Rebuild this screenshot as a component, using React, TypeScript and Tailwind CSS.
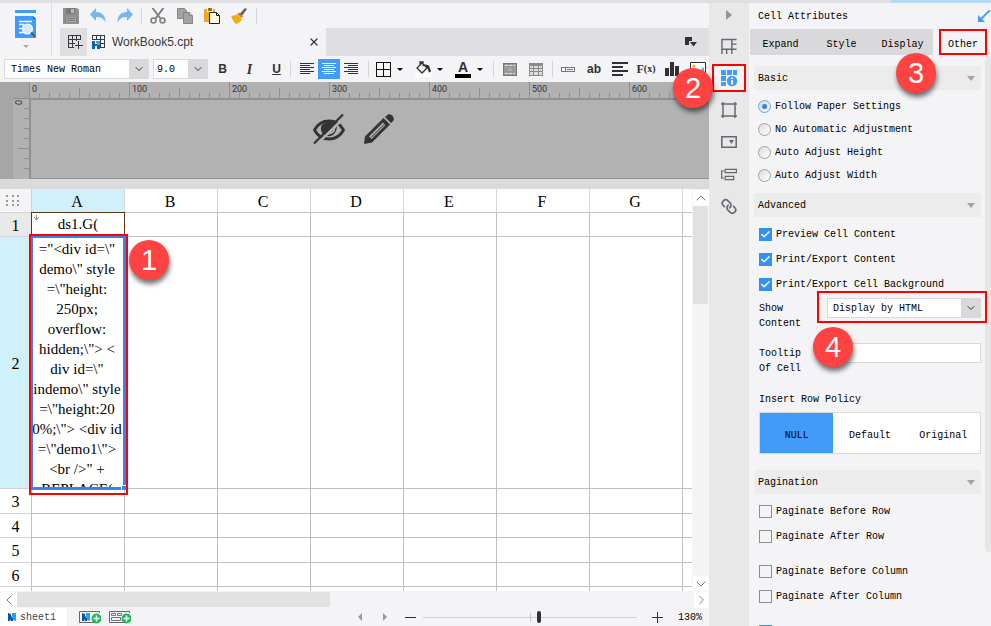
import type { ReactNode } from 'react';
import { Check, ChevronDown, ChevronLeft, ChevronRight, ChevronUp, Link, X } from 'lucide-react';

const columns = ['A', 'B', 'C', 'D', 'E', 'F', 'G'];

const formulaLines = [
  '="<div id=\\"',
  'demo\\" style',
  '=\\"height:',
  '250px;',
  'overflow:',
  'hidden;\\"> <',
  'div id=\\"',
  'indemo\\" style',
  '=\\"height:20',
  '0%;\\"> <div id',
  '=\\"demo1\\">',
  '<br />" +',
  'REPLACE(',
];

const rows = [
  { label: '1', height: 'h-[24px]' },
  { label: '2', height: 'h-[252px]' },
  { label: '3', height: 'h-[25px]' },
  { label: '4', height: 'h-[24px]' },
  { label: '5', height: 'h-[25px]' },
  { label: '6', height: 'h-[24px]' },
];

const rulerMarks = [0, 100, 200, 300, 400, 500, 600];
const rulerTicks = 'M.5 0v16M50.500 6v10M10.500 11v5M20.500 11v5M30.500 11v5M40.500 11v5M60.500 11v5M70.500 11v5M80.500 11v5M90.500 11v5';

function Callout({ n, className }: { n: number; className: string }) {
  return (
    <span
      className={`absolute z-30 flex h-10 w-10 items-center justify-center rounded-full bg-[#ff4242] font-['Liberation_Sans',sans-serif] text-[29px] leading-none text-white shadow-[1px_4px_5px_rgba(0,0,0,0.55)] ${className}`}
    >
      {n}
    </span>
  );
}

function Divider() {
  return <span className="h-4 w-px shrink-0 bg-[#d5d5d8]" />;
}

function IconButton({ label, className = 'w-4', children }: { label: string; className?: string; children: ReactNode }) {
  return (
    <button type="button" aria-label={label} className={`flex h-5 shrink-0 items-center justify-center ${className}`}>
      {children}
    </button>
  );
}

function Caret() {
  return (
    <svg width="6" height="3" viewBox="0 0 6 3" className="fill-black">
      <path d="M0 0h6L3 3z" />
    </svg>
  );
}

/* ---------- top bars ---------- */

function QuickToolbar() {
  return (
    <div className="flex h-[25px] items-center gap-[11px] pl-[3px]">
      <IconButton label="Save">
        <svg width="16" height="16" viewBox="0 0 16 16">
          <path d="M0 0h14l2 2v14H0z" fill="#909090" />
          <path d="M3 0h9v6H3zM2 9h12v5H2z" fill="#7a7a7a" />
          <path d="M8 1h3v4H8z" fill="#b9b9b9" />
          <path d="M3 9h10v5H3z" fill="#a5a5a5" />
          <path d="M4 10.500h8M4 12.500h8" stroke="#7a7a7a" />
        </svg>
      </IconButton>
      <IconButton label="Undo">
        <svg width="16" height="15" viewBox="0 0 16 15">
          <path d="M6 0v4c6 0 9.500 3.500 9.500 10.500C13.500 10.500 11 9 6 9v4L0 6.500z" fill="#78b4f0" />
        </svg>
      </IconButton>
      <IconButton label="Redo">
        <svg width="16" height="15" viewBox="0 0 16 15">
          <path d="M10 0v4C4 4 .5 7.500.5 14.500 2.500 10.500 5 9 10 9v4l6-6.500z" fill="#78b4f0" />
        </svg>
      </IconButton>
      <div className="-mx-[3px] flex">
        <Divider />
      </div>
      <IconButton label="Cut">
        <svg width="16" height="16" viewBox="0 0 16 16" fill="none" stroke="#808080" strokeWidth="2">
          <path d="M2.500 0l8 10.500M13.500 0l-8 10.500" />
          <circle cx="3.500" cy="12.500" r="2.500" strokeWidth="1.600" />
          <circle cx="12.500" cy="12.500" r="2.500" strokeWidth="1.600" />
        </svg>
      </IconButton>
      <IconButton label="Copy">
        <svg width="16" height="16" viewBox="0 0 16 16" fill="#a3a3a3" stroke="#858585">
          <path d="M.5.5h7l2 2v8h-9z" />
          <path d="M6.500 4.500h6l3 3v8h-9z" />
          <path d="M12.500 4.500v3h3" fill="#ddd" />
        </svg>
      </IconButton>
      <IconButton label="Paste">
        <svg width="16" height="16" viewBox="0 0 16 16">
          <path d="M0 1h3v3h6V1h2v13H0z" fill="#f2a81d" />
          <path d="M4 0h4v3H4z" fill="#a86c08" />
          <path d="M5.500 4.500h7l3 3v8h-10z" fill="#fffbe6" stroke="#222" />
          <path d="M12.500 4.500v3h3" fill="none" stroke="#222" />
        </svg>
      </IconButton>
      <IconButton label="Format painter">
        <svg width="16" height="16" viewBox="0 0 16 16">
          <path d="M14 0l2 1-5 7-2.500-2z" fill="#62626b" />
          <path d="M8 4.500l4 4-1.500 1.500-4-4z" fill="#c6781a" />
          <path d="M6 6l5 5c-1 2.500-3.500 4.500-6 5-2.500-2-4-5-5-8.500 2 .6 4 0 6-1.500z" fill="#f5ac12" />
        </svg>
      </IconButton>
      <div className="-ml-[2px] flex">
        <Divider />
      </div>
    </div>
  );
}

function FileTabs() {
  return (
    <div className="flex h-7 items-center bg-[#dfdfe1]">
      <IconButton label="New workbook" className="w-[27px] pl-1">
        <svg width="15" height="14" viewBox="0 0 15 14" fill="none" stroke="#38393d" shapeRendering="crispEdges">
          <path d="M.5.5h12v4H.5zM.5 4.500v8h5M.5 8.500h6M4.500.5v12M8.500.5v5" />
          <path d="M10.500 6v8M7 10.500h8" />
        </svg>
      </IconButton>
      <div className="flex h-full w-[239px] items-center bg-[#f4f4f7] pl-[5px] pr-1.5">
        <svg width="13" height="14" viewBox="0 0 13 14" shapeRendering="crispEdges">
          <path d="M.5 5V.5h12v12H9M.5 4.500h12M8 8.500h4.500M4.500.5v4M8.500.5v12" fill="none" stroke="#38393d" />
          <path d="M0 6h3v3h5v5H5v-3H3v3H0z" fill="#1263b5" />
          <path d="M4 6h4v4H5z" fill="#30a8e0" />
        </svg>
        <span className="ml-[7px] flex-1 text-[12px] text-[#38393d]">WorkBook5.cpt</span>
        <button type="button" aria-label="Close WorkBook5.cpt">
          <X size={12} className="text-[#38393d]" strokeWidth={2.5} />
        </button>
      </div>
      <div className="flex flex-1 justify-end pr-3">
        <IconButton label="Window list" className="w-3">
          <svg width="12" height="10" viewBox="0 0 12 10" fill="#303134">
            <path d="M0 0h7v4H4v4H0zM5 5h7l-3.500 4.500z" />
          </svg>
        </IconButton>
      </div>
    </div>
  );
}

function AlignIcon({ x2, x1 = 0 }: { x1?: number; x2: number }) {
  return (
    <svg width="14" height="12" viewBox="0 0 14 12" stroke="currentColor" shapeRendering="crispEdges">
      <path d={`M0 .5h14M${x1} 2.500H${x2}M0 4.500h14M${x1} 6.500H${x2}M0 8.500h14M${x1} 10.500H${x2}`} />
    </svg>
  );
}

function FormatToolbar() {
  return (
    <div className="flex h-[26px] shrink-0 items-center overflow-hidden pl-1 text-[#303134]">
      <div className="relative flex h-5 w-[145px] shrink-0">
        <select
          aria-label="Font"
          className="h-5 w-full appearance-none border border-[#d9d9dc] bg-white pl-1.5 font-['Liberation_Mono',monospace] text-[10px] text-black"
        >
          <option>Times New Roman</option>
        </select>
        <span className="pointer-events-none absolute inset-y-0 right-0 flex w-5 items-center justify-center bg-[#d9d9dc]">
          <ChevronDown size={12} />
        </span>
      </div>
      <div className="relative ml-1 flex h-5 w-[55px] shrink-0">
        <select
          aria-label="Font size"
          className="h-5 w-full appearance-none border border-[#d9d9dc] bg-white pl-[3px] font-['Liberation_Mono',monospace] text-[10px] text-black"
        >
          <option>9.0</option>
        </select>
        <span className="pointer-events-none absolute inset-y-0 right-0 flex w-5 items-center justify-center bg-[#d9d9dc]">
          <ChevronDown size={12} />
        </span>
      </div>
      <button type="button" className="ml-px w-[27px] shrink-0 text-[12px] font-bold">B</button>
      <button type="button" className="w-[27px] shrink-0 font-['Liberation_Serif',serif] text-[14px] font-bold italic">I</button>
      <button type="button" className="w-[27px] shrink-0 text-[12px] font-bold underline">U</button>
      <Divider />
      <div className="ml-[5px] mr-1.5 flex shrink-0">
        <IconButton label="Align left" className="w-[22px]">
          <AlignIcon x2={10} />
        </IconButton>
        <IconButton label="Align center" className="w-[22px] bg-[#409cf8] text-white">
          <AlignIcon x1={2} x2={12} />
        </IconButton>
        <IconButton label="Align right" className="w-[22px]">
          <AlignIcon x1={4} x2={14} />
        </IconButton>
      </div>
      <Divider />
      <div className="mx-1.5 flex shrink-0 gap-3 pr-1">
        <IconButton label="Borders" className="w-7 gap-1.5">
          <svg width="15" height="15" viewBox="0 0 15 15" fill="none" stroke="#111" shapeRendering="crispEdges">
            <path d="M.5.5h14v14H.5zM7.500 0v15M0 7.500h15" />
          </svg>
          <Caret />
        </IconButton>
        <IconButton label="Fill color" className="w-7 gap-1.5">
          <svg width="16" height="16" viewBox="0 0 16 16">
            <path d="M0 12h16v4H0z" fill="#fff" />
            <path d="M7 2L2 7l5 5 5-5zM5 5V1h3v4" fill="none" stroke="#303134" strokeWidth="1.300" />
            <path d="M9 3l5 1.500 2 6-2 1-1.500-4z" fill="#303134" />
          </svg>
          <Caret />
        </IconButton>
        <IconButton label="Text color" className="w-7 gap-1.5">
          <span className="w-4 border-b-4 border-black text-center text-[14px] font-bold leading-[13px]">A</span>
          <Caret />
        </IconButton>
      </div>
      <Divider />
      <div className="mx-2 flex shrink-0 gap-2.5">
        <IconButton label="Merge cells">
          <svg width="14" height="13" viewBox="0 0 14 13" shapeRendering="crispEdges">
            <path d="M.5.5h13v12H.5z" fill="#999" stroke="#777" />
            <path d="M2 2.500h10M2 10.500h10" stroke="#ddd" strokeDasharray="3 1" />
            <path d="M5 5h4v3H5z" fill="#aaa" />
          </svg>
        </IconButton>
        <IconButton label="Unmerge cells">
          <svg width="14" height="13" viewBox="0 0 14 13" shapeRendering="crispEdges">
            <path d="M0 0h14v13H0z" fill="#888" />
            <path d="M1 3h3v2H1zM5 3h4v2H5zM10 3h3v2h-3zM1 9h3v3H1zM5 9h4v3H5zM10 9h3v3h-3zM1 6h3v2H1zM5 6h4v2H5zM10 6h3v2h-3z" fill="#ddd" />
          </svg>
        </IconButton>
      </div>
      <Divider />
      <div className="ml-[7px] flex shrink-0 gap-2.5">
        <IconButton label="Widget">
          <svg width="14" height="5" viewBox="0 0 14 5" shapeRendering="crispEdges" fill="none" stroke="#777">
            <path d="M.5.5h13v4H.5zM4.500 1v3M6 2.500h6" />
          </svg>
        </IconButton>
        <button type="button" className="w-4 text-center text-[12px] font-bold leading-5">ab</button>
        <IconButton label="Rich text">
          <svg width="16" height="14" viewBox="0 0 16 14" stroke="#303134" strokeWidth="2" shapeRendering="crispEdges">
            <path d="M0 1h16M0 5h11M0 9h16M0 13h11" />
          </svg>
        </IconButton>
        <button type="button" className="flex w-4 justify-center whitespace-nowrap font-['Liberation_Serif',serif] text-[12px] font-bold leading-5">
          F<span className="text-[10px]">(x)</span>
        </button>
        <IconButton label="Chart">
          <svg width="14" height="14" viewBox="0 0 14 14" fill="#303134">
            <path d="M0 6h4v8H0zM5 0h4v14H5zM10 4h4v10h-4z" />
          </svg>
        </IconButton>
        <IconButton label="Image">
          <svg width="16" height="14" viewBox="0 0 16 14">
            <path d="M.5.5h15v13H.5z" fill="#fff" stroke="#303134" />
            <circle cx="4" cy="4" r="1.500" fill="#f6a623" />
            <path d="M2 12l5-5 3 3 3-5 1 1v6z" fill="#4ab8ee" />
          </svg>
        </IconButton>
      </div>
    </div>
  );
}

/* ---------- report canvas ---------- */

function HeaderCanvas() {
  return (
    <div className="shrink-0 bg-[#b1b1b1] text-[#333]">
      <div className="flex h-4 overflow-hidden">
        <span className="w-[29px] shrink-0 bg-[#a6a6a6]" />
        {rulerMarks.map((mark) => (
          <svg key={mark} width="100" height="16" className="shrink-0" stroke="#8f8f8f" shapeRendering="crispEdges">
            <path d={rulerTicks} />
            <text x="3" y="10" stroke="none" fill="#333" fontSize="9" fontFamily="Roboto, sans-serif">
              {mark}
            </text>
          </svg>
        ))}
        <svg height="16" className="w-0 min-w-0 flex-1" stroke="#8f8f8f" shapeRendering="crispEdges">
          <pattern id="ticks" width="100" height="16" patternUnits="userSpaceOnUse">
            <path d={rulerTicks} />
          </pattern>
          <rect width="100%" height="16" fill="url(#ticks)" stroke="none" />
        </svg>
      </div>
      <div className="flex h-[81px]">
        <span className="w-[13px] bg-[#a6a6a6]" />
        <svg width="16" height="81" stroke="#8f8f8f" shapeRendering="crispEdges">
          <path d="M0 .5h16M11 10.500h5M11 20.500h5M11 30.500h5M11 40.500h5M5 50.500h11M11 60.500h5M11 70.500h5" />
          <text x="-7" y="9" stroke="none" fill="#333" fontSize="9" fontFamily="Roboto, sans-serif" transform="rotate(-90)">
            0
          </text>
        </svg>
        <div className="flex flex-1 items-center justify-center gap-[18px] border-2 border-b border-r-0 border-[#919191] bg-[#b2b2b2] pb-5 pr-[34px]">
          <button type="button" aria-label="Hide header">
            <svg width="33" height="30" viewBox="0 0 33 30">
              <path d="M1.500 16C8 4 24 4 30.500 16 24 28 8 28 1.500 16z" fill="none" stroke="#333" strokeWidth="2.800" />
              <path d="M8 13c1-6 15-7 16-1 0 6-4 10-7 10-6 1-10-4-9-9z" fill="#333" />
              <path d="M3 31L33 2" stroke="#b2b2b2" strokeWidth="2.500" />
              <path d="M21 12c2 3 0 7-6 8" fill="none" stroke="#b2b2b2" strokeWidth="1.500" />
              <path d="M1 29.500L30 .5" stroke="#333" strokeWidth="2.200" />
            </svg>
          </button>
          <button type="button" aria-label="Edit header">
            <svg width="30" height="30" viewBox="0 0 30 30">
              <path d="M0 30l1-7.500L19.500 4l6.500 6.500L8 28.500z" fill="#333" />
              <path d="M5 22.500L19 8.500l2.500 2.500L7.500 25z" fill="#b2b2b2" />
              <path d="M7 23.500L21 9.500" stroke="#333" />
              <path d="M21 3l3-2.500c3-1.500 7 3 5.500 6L27 9z" fill="#333" />
            </svg>
          </button>
        </div>
      </div>
    </div>
  );
}

function SelectedCell() {
  return (
    <>
      <div className="h-[251px] overflow-hidden whitespace-nowrap pr-0.5 pt-[2px] font-['Liberation_Serif',serif] text-[15px] leading-5">
        {formulaLines.map((line) => (
          <div key={line} className="flex justify-center">{line}</div>
        ))}
      </div>
      <span className="absolute -left-px -top-px z-10 h-[254px] w-[95px] border-2 border-b-[3px] border-r-[3px] border-[#3c82ee]" />
      <span className="absolute -bottom-[2px] -right-[2px] z-10 h-[5px] w-[5px] border-l border-t border-white bg-[#3c82ee]" />
      <span className="absolute -left-[3px] -top-[3px] z-20 h-[261px] w-[99px] border-2 border-[#f00]" />
      <Callout n={1} className="-right-[45px] top-[3px]" />
    </>
  );
}

function SheetGrid() {
  return (
    <div className="flex min-h-0 flex-1 bg-[#f4f4f7]">
      <div className="min-w-0 flex-1 overflow-hidden bg-white">
        <table className="w-full min-w-[692px] table-fixed border-separate border-spacing-0 text-center">
          <thead className="font-['Liberation_Serif',serif] text-[16px] leading-none">
            <tr className="h-[24px]">
              <th className="w-8 border-b border-r border-[#d3d3d5] bg-[#f4f4f7] p-0">
                <svg width="14" height="12" viewBox="0 0 14 12" className="ml-1.5" fill="#999" shapeRendering="crispEdges">
                  <path d="M0 0h2v2H0zM6 0h2v2H6zM11 0h2v2h-2zM0 5h2v2H0zM6 5h2v2H6zM11 5h2v2h-2zM0 9h2v2H0zM6 9h2v2H6zM11 9h2v2h-2z" />
                </svg>
              </th>
              {columns.map((col) => (
                <th
                  key={col}
                  scope="col"
                  className={`w-[93px] border-b border-r border-b-[#c0c0c0] border-r-[#d6d6d8] p-0 pr-0.5 pt-0.5 font-normal ${col === 'A' ? 'bg-[#d0f0fc]' : ''}`}
                >
                  {col}
                </th>
              ))}
              <th className="border-b border-[#c0c0c0] p-0" />
            </tr>
          </thead>
          <tbody>
            {rows.map((row) => (
              <tr key={row.label} className={row.height}>
                <th
                  scope="row"
                  className={`border-b border-r border-b-[#d3d3d5] border-r-[#c0c0c0] p-0 pt-0.5 font-['Liberation_Serif',serif] text-[16px] font-normal leading-none ${row.label === '2' ? 'bg-[#d0f0fc]' : row.label === '1' ? 'bg-[#e9e9e9]' : ''}`}
                >
                  {row.label}
                </th>
                {columns.map((col) => (
                  <td key={col} className="relative border-b border-r border-[#c0c0c0] p-0">
                    {col === 'A' && row.label === '1' && (
                      <>
                        <span className="absolute -left-px -top-px h-[24px] w-[94px] border border-[#5a3412]" />
                        <svg width="5" height="5" className="absolute left-0.5 top-0.5" stroke="#888">
                          <path d="M2.500 0v5M0 2l2.500 3L5 2" fill="none" />
                        </svg>
                        <div className="pb-0.5 font-['Liberation_Serif',serif] text-[15px] leading-5">ds1.G(</div>
                      </>
                    )}
                    {col === 'A' && row.label === '2' && <SelectedCell />}
                  </td>
                ))}
                <td className="border-b border-[#c0c0c0] p-0" />
              </tr>
            ))}
            <tr className="h-2">
              <th className="border-r border-[#c0c0c0] p-0" />
              {columns.map((col) => (
                <td key={col} className="border-r border-[#c0c0c0] p-0" />
              ))}
              <td className="p-0" />
            </tr>
          </tbody>
        </table>
      </div>
      <div className="flex w-[17px] flex-col items-stretch pl-px text-[#777]">
        <button type="button" aria-label="Scroll up" className="mt-px flex h-4 items-center justify-center bg-white">
          <ChevronUp size={16} strokeWidth={1.5} />
        </button>
        <span className="mr-px h-[98px] bg-[#e1e1e1]" />
        <button type="button" aria-label="Scroll down" className="mt-auto flex h-[15px] items-center justify-center bg-white">
          <ChevronDown size={16} strokeWidth={1.5} />
        </button>
      </div>
    </div>
  );
}

function StatusBar() {
  return (
    <div className="shrink-0 bg-[#f4f4f7] text-[#777]">
      <div className="flex h-[17px] items-stretch pt-px">
        <button type="button" aria-label="Scroll left" className="ml-px flex w-4 items-center justify-center bg-white">
          <ChevronLeft size={16} strokeWidth={1.5} />
        </button>
        <span className="mb-px w-[313px] bg-[#e1e1e1]" />
        <button type="button" aria-label="Scroll right" className="ml-auto flex w-[15px] items-center justify-center bg-white">
          <ChevronRight size={16} strokeWidth={1.5} />
        </button>
      </div>
      <div className="flex h-[18px] items-center">
        <button
          type="button"
          className="flex h-full w-[67px] items-center gap-1 bg-white pl-2 font-['Liberation_Mono',monospace] text-[10px] text-[#444]"
        >
          <svg width="8" height="8" viewBox="0 0 8 8">
            <path d="M0 0l3 1v2l2 2v3H3L2 6v2H0z" fill="#0b57a5" />
            <path d="M4 0h4v8L5 7V4H4z" fill="#2ba3dd" />
          </svg>
          sheet1
        </button>
        <IconButton label="Add report sheet" className="ml-3 w-[22px]">
          <svg width="22" height="13" viewBox="0 0 22 13">
            <path d="M17 11.500H.5V.5h20V2" fill="none" stroke="#666" />
            <path d="M3 2l3 1v2l2 2v3H6L5 8v2H3z" fill="#0b57a5" />
            <path d="M7 2h4v8L8 9V6H7z" fill="#2ba3dd" />
            <circle cx="17.500" cy="7.500" r="5" fill="#1cbb57" />
            <path d="M17.500 4.500v6M14.500 7.500h6" stroke="#fff" strokeWidth="1.500" />
          </svg>
        </IconButton>
        <IconButton label="Add form sheet" className="ml-2 w-[22px]">
          <svg width="22" height="13" viewBox="0 0 22 13">
            <path d="M17 11.500H.5V.5h20V2" fill="none" stroke="#666" />
            <path d="M2.500 2.500h4v2h-4zM8.500 2.500h4v2h-4zM2.500 6.500h9v3h-9z" fill="none" stroke="#777" />
            <circle cx="17.500" cy="7.500" r="5" fill="#1cbb57" />
            <path d="M17.500 4.500v6M14.500 7.500h6" stroke="#fff" strokeWidth="1.500" />
          </svg>
        </IconButton>
        <div className="ml-auto flex items-center pr-[7px]">
          <IconButton label="Previous sheet" className="w-[25px]">
            <svg width="4" height="8" className="fill-[#999]"><path d="M4 0v8L0 4z" /></svg>
          </IconButton>
          <IconButton label="Next sheet" className="w-[25px]">
            <svg width="4" height="8" className="fill-[#999]"><path d="M0 0v8l4-4z" /></svg>
          </IconButton>
          <IconButton label="Zoom out" className="w-[25px]">
            <svg width="11" height="11" stroke="#303134" shapeRendering="crispEdges"><path d="M0 5.500h11" /></svg>
          </IconButton>
          <div className="relative flex h-4 items-center">
            <span className="absolute left-1/2 top-1 h-[9px] w-px bg-[#c8c8cb]" />
            <input
              type="range"
              aria-label="Zoom"
              min={0}
              max={240}
              defaultValue={130}
              className="relative h-px w-[214px] appearance-none bg-[#d0d0d3] [&::-webkit-slider-thumb]:h-3 [&::-webkit-slider-thumb]:w-1 [&::-webkit-slider-thumb]:appearance-none [&::-webkit-slider-thumb]:rounded-sm [&::-webkit-slider-thumb]:bg-[#303134]"
            />
          </div>
          <IconButton label="Zoom in" className="w-[41px]">
            <svg width="11" height="11" stroke="#303134" shapeRendering="crispEdges"><path d="M0 5.500h11M5.500 0v11" /></svg>
          </IconButton>
          <span className="font-['Liberation_Mono',monospace] text-[10px] text-black">130%</span>
        </div>
      </div>
    </div>
  );
}

/* ---------- right side ---------- */

function SideRail() {
  return (
    <nav className="flex w-10 shrink-0 flex-col items-center bg-[#e8e8e8]">
      <IconButton label="Collapse panel" className="mt-[2px] w-8">
        <svg width="6" height="10" className="fill-[#949494]"><path d="M0 0l6 5-6 5z" /></svg>
      </IconButton>
      <div className="flex flex-col items-center gap-3 pt-[11px] text-[#666974]">
        <IconButton label="Cell element">
          <svg width="17" height="17" viewBox="0 0 17 17" fill="none" stroke="currentColor" strokeWidth="1.500">
            <path d="M16.500 1H1v15.500M11.500 1v15.500M1 11.500h15.500M6 11.500v5M11.500 6h5" />
          </svg>
        </IconButton>
        <div className="relative -my-1">
          <button
            type="button"
            aria-label="Cell attributes"
            className="flex h-7 w-[34px] items-center justify-center border-2 border-[#f00] bg-[#f4f4f7]"
          >
            <svg width="17" height="17" viewBox="0 0 17 17" fill="#409cf8">
              <path d="M0 0h5v5H0zM6 0h5v5H6zM12 0h4v5h-4zM0 6h5v5H0zM0 12h5v4H0z" />
              <circle cx="11" cy="11" r="6" fill="#f4f4f7" />
              <circle cx="11" cy="11" r="5.200" />
              <path d="M10.200 10h1.800v4.500h-1.800zM10.200 7.500h1.800v1.600h-1.800z" fill="#fff" />
            </svg>
          </button>
          <Callout n={2} className="right-[33px] top-1" />
        </div>
        <IconButton label="Floating element">
          <svg width="16" height="16" viewBox="0 0 16 16" fill="none" stroke="currentColor" strokeWidth="1.500">
            <path d="M2 0v16M14 0v16M0 2h16M0 14h16" />
          </svg>
        </IconButton>
        <IconButton label="Widget settings">
          <svg width="16" height="12" viewBox="0 0 16 12">
            <path d="M.8.8h14.400v10.400H.8z" fill="none" stroke="currentColor" strokeWidth="1.500" />
            <path d="M8 4h5l-2.500 4z" fill="currentColor" />
          </svg>
        </IconButton>
        <IconButton label="Condition attributes">
          <svg width="18" height="13" viewBox="0 0 18 13" fill="none" stroke="currentColor" strokeWidth="1.400">
            <path d="M4.700.7h12.600v3.600H4.700zM4.700 8.700h9.600v3.600H4.700zM3 2.500H.7v8H3" />
          </svg>
        </IconButton>
        <IconButton label="Hyperlink">
          <Link size={17} strokeWidth={2.5} className="rotate-90" />
        </IconButton>
      </div>
    </nav>
  );
}

function SectionHeader({ title }: { title: string }) {
  return (
    <button type="button" className="flex h-6 w-full items-center justify-between bg-[#ececec] pl-1 pr-1.5">
      {title}
      <svg width="8" height="5" className="fill-[#a5a5a5]"><path d="M0 0h8L4 5z" /></svg>
    </button>
  );
}

function RadioRow({ label, checked = false }: { label: string; checked?: boolean }) {
  return (
    <label className="flex h-[23px] items-center gap-1">
      <span className="relative flex h-[13px] w-[13px]">
        <input
          type="radio"
          name="adjust"
          defaultChecked={checked}
          className="peer h-[13px] w-[13px] appearance-none rounded-full border border-[#a0a0a0] bg-gradient-to-br from-[#dcdcdc] to-white checked:border-[#70a5dd] checked:to-[#eef6ff]"
        />
        <span className="pointer-events-none absolute left-1 top-1 hidden h-[5px] w-[5px] rounded-full bg-[#2f82e8] peer-checked:block" />
      </span>
      {label}
    </label>
  );
}

function CheckRow({ label, checked = false }: { label: string; checked?: boolean }) {
  return (
    <label className="flex h-[25px] items-center gap-1">
      <span className="relative flex h-[13px] w-[13px]">
        <input
          type="checkbox"
          defaultChecked={checked}
          className="peer h-[13px] w-[13px] appearance-none border border-[#8e8e8e] checked:border-[#3391f0] checked:bg-[#3391f0]"
        />
        <Check
          size={11}
          strokeWidth={3}
          className="pointer-events-none absolute left-px top-px hidden text-white peer-checked:block"
        />
      </span>
      {label}
    </label>
  );
}

function AttributesPanel() {
  return (
    <aside className="flex w-[242px] shrink-0 flex-col bg-[#f4f4f7] font-['Liberation_Mono',monospace] text-[10px] text-black">
      <div className="flex h-[26px] items-center justify-between pl-[9px]">
        <h2>Cell Attributes</h2>
        <button type="button" aria-label="Dock panel">
          <svg width="13" height="12" viewBox="0 0 13 12" fill="none" stroke="#409cf8" strokeWidth="1.800">
            <path d="M12 0L2 10" />
            <path d="M0 12V5l7 7z" fill="#409cf8" stroke="none" />
          </svg>
        </button>
      </div>
      <div className="flex h-[26px] justify-between pl-px pr-1">
        <div className="flex w-[183px] bg-[#d9d9dc] pt-1">
          <button type="button" className="flex-1">Expand</button>
          <button type="button" className="flex-1">Style</button>
          <button type="button" className="flex-1">Display</button>
        </div>
        <div className="relative">
          <button type="button" className="h-[26px] w-12 border-2 border-[#f00] pt-1">Other</button>
          <Callout n={3} className="-left-[43px] top-6" />
        </div>
      </div>
      <div className="flex min-h-0 flex-1">
        <div className="min-w-0 flex-1 pl-[5px] pr-1 pt-[11px]">
          <SectionHeader title="Basic" />
          <div className="pb-1.5 pl-1 pt-[5px]">
            <RadioRow label="Follow Paper Settings" checked />
            <RadioRow label="No Automatic Adjustment" />
            <RadioRow label="Auto Adjust Height" />
            <RadioRow label="Auto Adjust Width" />
          </div>
          <SectionHeader title="Advanced" />
          <div className="pl-[5px] pt-[5px]">
            <CheckRow label="Preview Cell Content" checked />
            <CheckRow label="Print/Export Content" checked />
            <CheckRow label="Print/Export Cell Background" checked />
            <div className="flex h-[45px] items-start pt-px">
              <label htmlFor="show-content" className="w-[68px] pt-[3px] leading-[15px]">
                Show
                <br />
                Content
              </label>
              <div className="relative flex h-5 flex-1">
                <select
                  id="show-content"
                  className="h-5 w-full appearance-none border border-[#d9d9dc] bg-white pl-[5px]"
                >
                  <option>Display by HTML</option>
                </select>
                <span className="pointer-events-none absolute inset-y-0 right-0 flex w-5 items-center justify-center bg-[#d9d9dc]">
                  <ChevronDown size={12} className="text-[#333]" />
                </span>
                <span className="pointer-events-none absolute -bottom-[5px] -left-2.5 -right-1.5 -top-[7px] border-2 border-[#f00]" />
                <Callout n={4} className="-left-[14px] top-[29px]" />
              </div>
            </div>
            <div className="flex h-[45px] items-start pt-px">
              <label htmlFor="tooltip" className="w-[68px] pt-[3px] leading-[15px]">
                Tooltip
                <br />
                Of Cell
              </label>
              <input id="tooltip" type="text" className="h-5 min-w-0 flex-1 border border-[#d9d9dc] bg-white px-1" />
            </div>
            <p className="pt-[5px] leading-[15px]">Insert Row Policy</p>
            <div className="mt-[5px] flex h-[42px] border border-[#d9d9dc] bg-white">
              <button type="button" className="flex-1 bg-[#409cf8] pt-1">NULL</button>
              <button type="button" className="flex-1 pt-1">Default</button>
              <button type="button" className="flex-1 pt-1">Original</button>
            </div>
          </div>
          <div className="mt-4">
            <SectionHeader title="Pagination" />
          </div>
          <div className="pl-[5px] pt-[5px]">
            <CheckRow label="Paginate Before Row" />
            <CheckRow label="Paginate After Row" />
            <div className="py-2.5">
              <CheckRow label="Paginate Before Column" />
              <CheckRow label="Paginate After Column" />
            </div>
            <input
              type="checkbox"
              aria-label="Allow page break"
              defaultChecked
              className="mt-1.5 block h-[13px] w-[13px] appearance-none bg-[#3391f0]"
            />
          </div>
        </div>
        <span className="mt-px h-[496px] w-1.5 rounded-l bg-[#e6e6e6]" />
      </div>
    </aside>
  );
}

export default function App() {
  return (
    <div className="flex h-screen w-full flex-col overflow-hidden bg-[#f4f4f7] font-['Liberation_Sans',Arial,sans-serif]">
      <div className="flex h-[3px] shrink-0 justify-end bg-[#dfdfe1]">
        <span className="w-[100px] bg-[#b5daf3]" />
      </div>
      <div className="flex min-h-0 flex-1">
        <main className="flex min-w-0 flex-1 flex-col">
          <div className="flex h-[53px] shrink-0">
            <div className="flex w-[52px] shrink-0 items-start justify-center border-r border-[#dcdcdf] pt-[7px]">
              <IconButton label="Preview" className="h-[39px] w-6">
                <svg width="22" height="39" viewBox="0 0 22 39">
                  <path d="M0 0h21v3H0zM0 6h18l3 3v19H0z" fill="#409cf8" />
                  <path d="M18 6v3h3z" fill="#1d68b8" />
                  <path d="M4 11.500h13M4 14.500h5M4 18.500h3M4 22.500h5" stroke="#fff" strokeWidth="1.500" />
                  <circle cx="12.500" cy="19" r="5" fill="#d2eaff" stroke="#fff" strokeWidth="1.200" />
                  <path d="M16 22.500l4 4" stroke="#555" strokeWidth="2" />
                  <path d="M8 35h6l-3 3z" fill="#aaa" />
                </svg>
              </IconButton>
            </div>
            <div className="ml-2 min-w-0 flex-1">
              <QuickToolbar />
              <FileTabs />
            </div>
          </div>
          <FormatToolbar />
          <HeaderCanvas />
          <div className="h-[10px] shrink-0 bg-[#dadadc]" />
          <SheetGrid />
          <StatusBar />
        </main>
        <SideRail />
        <AttributesPanel />
      </div>
    </div>
  );
}
